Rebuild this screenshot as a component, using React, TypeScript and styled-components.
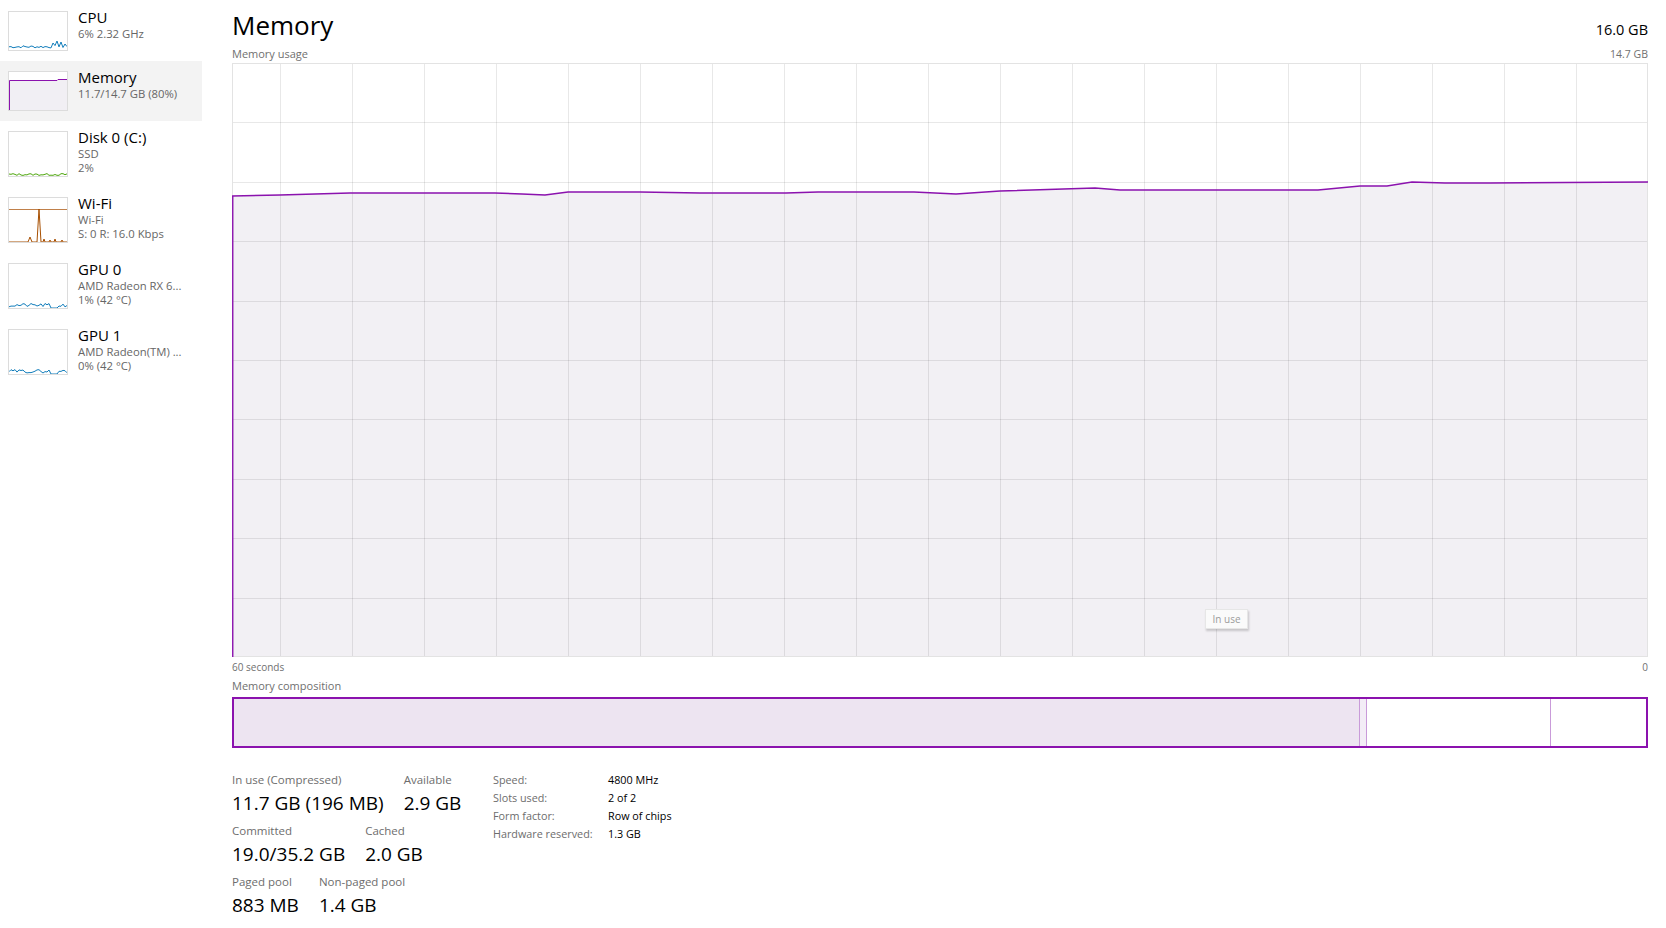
import React from 'react';
import styled, { createGlobalStyle } from 'styled-components';

const GlobalStyle = createGlobalStyle`
  html, body { margin: 0; padding: 0; background: #ffffff; }
  body { font-family: "Segoe UI", "Open Sans", "Noto Sans", sans-serif; color: #000; }
  * { box-sizing: border-box; }
`;

const Page = styled.div`
  display: flex;
  width: 1666px;
  height: 928px;
  overflow: hidden;
  background: #fff;
`;

const Sidebar = styled.nav`
  width: 202px;
  flex: none;
  padding-top: 1px;
  display: flex;
  flex-direction: column;
`;

const NavItem = styled.div<{ $active?: boolean; $tall?: boolean }>`
  display: flex;
  align-items: flex-start;
  gap: 10px;
  height: ${(p) => (p.$tall ? 66 : 60)}px;
  padding: 6px 0 0 8px;
  background: ${(p) => (p.$active ? '#f3f3f3' : 'transparent')};
`;

const Thumb = styled.div<{ $tall?: boolean }>`
  flex: none;
  width: 60px;
  height: ${(p) => (p.$tall ? 46 : 40)}px;
  margin-top: 4px;
  border: 1px solid #dcdcdc;
  background: #fff;
  svg { display: block; }
`;

const NavText = styled.div`
  display: flex;
  flex-direction: column;
  min-width: 0;
`;

const NavTitle = styled.div`
  font-size: 15px;
  line-height: 20px;
  color: #000;
  white-space: nowrap;
`;

const NavSub = styled.div`
  font-size: 11.3px;
  line-height: 14px;
  color: #666;
  white-space: nowrap;
`;

const Main = styled.main`
  flex: 1;
  display: flex;
  flex-direction: column;
  padding: 9px 18px 0 30px;
  min-width: 0;
`;

const HeaderRow = styled.div`
  display: flex;
  justify-content: space-between;
  align-items: baseline;
`;

const Title = styled.h1`
  margin: 0;
  font-size: 26px;
  line-height: 32px;
  font-weight: 400;
  color: #000;
`;

const Capacity = styled.div`
  font-size: 14.5px;
  color: #000;
`;

const CaptionRow = styled.div<{ $mt: number }>`
  display: flex;
  justify-content: space-between;
  align-items: baseline;
  margin-top: ${(p) => p.$mt}px;
`;

const Caption = styled.span<{ $size: number; $lh: number }>`
  font-size: ${(p) => p.$size}px;
  line-height: ${(p) => p.$lh}px;
  color: #707070;
`;

const ChartBox = styled.div`
  position: relative;
  width: 1416px;
  height: 594px;
  svg { display: block; }
`;

const Tooltip = styled.div`
  position: absolute;
  left: 973px;
  top: 546px;
  width: 43px;
  height: 20px;
  display: flex;
  align-items: center;
  justify-content: center;
  font-size: 10px;
  color: #9a9a9a;
  background: #fafafa;
  border: 1px solid #e6e6e6;
  box-shadow: 1px 2px 2px rgba(0, 0, 0, 0.18);
`;

const CompBar = styled.div`
  margin-top: 4px;
  width: 1416px;
  height: 51px;
  border: 2px solid #8b12ae;
  display: flex;
`;

const Segment = styled.div<{ $fill: string; $last?: boolean }>`
  height: 100%;
  flex: none;
  background: ${(p) => p.$fill};
  border-right: ${(p) => (p.$last ? 'none' : '1px solid #c99bd9')};
`;

const Stats = styled.section`
  display: flex;
  margin-top: 24px;
`;

const LeftStats = styled.div`
  width: 261px;
  flex: none;
  display: flex;
  flex-direction: column;
`;

const StatRow = styled.div`
  display: flex;
  gap: 20px;
  margin-bottom: 7px;
`;

const Stat = styled.div`
  display: flex;
  flex-direction: column;
  white-space: nowrap;
`;

const StatLabel = styled.div`
  font-size: 11.5px;
  line-height: 16px;
  color: #6d6d6d;
`;

const StatValue = styled.div`
  margin-top: 2px;
  font-size: 19px;
  line-height: 26px;
  color: #000;
`;

const Details = styled.dl`
  margin: 0;
  display: grid;
  grid-template-columns: 115px auto;
  font-size: 10.8px;
  line-height: 18px;
  align-content: start;
  margin-top: -1px;
`;

const DetailLabel = styled.dt`
  color: #6d6d6d;
  margin: 0;
`;

const DetailValue = styled.dd`
  color: #000;
  margin: 0;
`;

// ---------- data helpers ----------
const rng = (seed: number) => {
  let s = seed;
  return () => {
    s = (s * 9301 + 49297) % 233280;
    return s / 233280;
  };
};

const spark = (seed: number, w: number, base: number, amp: number, spikes: Record<number, number> = {}) => {
  const r = rng(seed);
  const pts: string[] = [];
  for (let x = 0; x <= w; x += 2) {
    let y = base - r() * amp;
    if (spikes[x] !== undefined) y = spikes[x];
    pts.push(`${x},${y.toFixed(1)}`);
  }
  return pts.join(' ');
};

const Spark: React.FC<{ w: number; h: number; points: string; color: string; fill?: string }> = ({ w, h, points, color, fill }) => (
  <svg width={w} height={h} viewBox={`0 0 ${w} ${h}`}>
    {fill && <polygon points={`0,${h} ${points} ${w},${h}`} fill={fill} />}
    <polyline points={points} fill="none" stroke={color} strokeWidth={1} />
  </svg>
);

const MemoryThumb = () => (
  <svg width={58} height={38} viewBox="0 0 58 38">
    <polygon points="0,38 0,8 48,8 49,7 58,7 58,38" fill="#f1eff4" />
    <polyline points="0.5,38 0.5,8.5 48,8.5 49,7.5 58,7.5" fill="none" stroke="#8b12ae" strokeWidth={1} />
  </svg>
);

const WifiThumb = () => (
  <svg width={58} height={44} viewBox="0 0 58 44">
    <line x1={0} y1={11.5} x2={58} y2={11.5} stroke="#c0804a" strokeWidth={1} />
    <polyline
      points="0,44 19,44 21,39 23,44 28,44 30,11 32,44 34,44 35,41 36,44 40,44 41,42 42,44 45,44 46,41 47,44 52,44 53,42 54,44 58,44"
      fill="none"
      stroke="#a74f01"
      strokeWidth={1}
    />
  </svg>
);

type NavEntry = {
  title: string;
  lines: string[];
  active?: boolean;
  thumb: React.ReactNode;
};

const navItems: NavEntry[] = [
  {
    title: 'CPU',
    lines: ['6%  2.32 GHz'],
    thumb: <Spark w={58} h={38} color="#117dbb" points={spark(7, 58, 36, 2.5, { 44: 31, 48: 29, 52: 30, 56: 32 })} />,
  },
  { title: 'Memory', lines: ['11.7/14.7 GB (80%)'], active: true, thumb: <MemoryThumb /> },
  {
    title: 'Disk 0 (C:)',
    lines: ['SSD', '2%'],
    thumb: <Spark w={58} h={44} color="#4da60c" points={spark(13, 58, 43.5, 2)} />,
  },
  { title: 'Wi-Fi', lines: ['Wi-Fi', 'S: 0 R: 16.0 Kbps'], thumb: <WifiThumb /> },
  {
    title: 'GPU 0',
    lines: ['AMD Radeon RX 6...', '1%  (42 °C)'],
    thumb: <Spark w={58} h={44} color="#117dbb" points={spark(21, 58, 43, 3.5, { 42: 44, 44: 44, 46: 44, 48: 44 })} />,
  },
  {
    title: 'GPU 1',
    lines: ['AMD Radeon(TM) ...', '0%  (42 °C)'],
    thumb: <Spark w={58} h={44} color="#117dbb" points={spark(29, 58, 43, 3.5, { 42: 44, 44: 44, 46: 44, 48: 44 })} />,
  },
];

const linePts: [number, number][] = [
  [0, 133], [48, 132], [118, 130], [263, 130], [290, 131], [313, 132], [336, 129], [408, 129],
  [468, 130], [554, 130], [586, 129], [682, 129], [724, 131], [768, 128], [863, 125],
  [888, 127], [978, 127], [1086, 127], [1128, 123], [1155, 123], [1180, 119],
  [1213, 120], [1258, 120], [1416, 119],
];

const CW = 1416;
const CH = 594;

const MemoryChart = () => {
  const line = linePts.map(([x, y]) => `${x},${y}`).join(' ');
  const rows = Array.from({ length: 9 }, (_, i) => Math.round(((i + 1) * CH) / 10) + 0.5);
  const cols = Array.from({ length: 19 }, (_, i) => 48 + 72 * i + 0.5);
  return (
    <svg width={CW} height={CH} viewBox={`0 0 ${CW} ${CH}`}>
      <rect x={0} y={0} width={CW} height={CH} fill="#fff" />
      <polygon points={`0,${CH} ${line} ${CW},${CH}`} fill="#f2f0f4" />
      {rows.map((y) => (
        <line key={`r${y}`} x1={0} y1={y} x2={CW} y2={y} stroke="rgba(0,0,0,0.09)" strokeWidth={1} shapeRendering="crispEdges" />
      ))}
      {cols.map((x) => (
        <line key={`c${x}`} x1={x} y1={0} x2={x} y2={CH} stroke="rgba(0,0,0,0.09)" strokeWidth={1} shapeRendering="crispEdges" />
      ))}
      <rect x={0.5} y={0.5} width={CW - 1} height={CH - 1} fill="none" stroke="#e3e3e3" strokeWidth={1} shapeRendering="crispEdges" />
      <polyline points={`0.75,${CH} 0.75,133 ${line}`} fill="none" stroke="#8b12ae" strokeWidth={1.4} />
    </svg>
  );
};

const segments = [
  { w: 1126, fill: '#ede4f1' },
  { w: 7, fill: '#f3edf6' },
  { w: 184, fill: '#ffffff' },
  { w: 95, fill: '#ffffff', last: true },
];

const stats = [
  [
    { label: 'In use (Compressed)', value: '11.7 GB (196 MB)' },
    { label: 'Available', value: '2.9 GB' },
  ],
  [
    { label: 'Committed', value: '19.0/35.2 GB' },
    { label: 'Cached', value: '2.0 GB' },
  ],
  [
    { label: 'Paged pool', value: '883 MB' },
    { label: 'Non-paged pool', value: '1.4 GB' },
  ],
];

const details = [
  ['Speed:', '4800 MHz'],
  ['Slots used:', '2 of 2'],
  ['Form factor:', 'Row of chips'],
  ['Hardware reserved:', '1.3 GB'],
];

export default function App() {
  return (
    <>
      <GlobalStyle />
      <Page>
        <Sidebar>
          {navItems.map((item) => {
            const tall = item.lines.length > 1;
            return (
              <NavItem key={item.title} $active={item.active} $tall={tall}>
                <Thumb $tall={tall}>{item.thumb}</Thumb>
                <NavText>
                  <NavTitle>{item.title}</NavTitle>
                  {item.lines.map((l) => (
                    <NavSub key={l}>{l}</NavSub>
                  ))}
                </NavText>
              </NavItem>
            );
          })}
        </Sidebar>
        <Main>
          <HeaderRow>
            <Title>Memory</Title>
            <Capacity>16.0 GB</Capacity>
          </HeaderRow>
          <CaptionRow $mt={4}>
            <Caption $size={11} $lh={18}>Memory usage</Caption>
            <Caption $size={10.5} $lh={18}>14.7 GB</Caption>
          </CaptionRow>
          <ChartBox>
            <MemoryChart />
            <Tooltip>In use</Tooltip>
          </ChartBox>
          <CaptionRow $mt={3}>
            <Caption $size={10} $lh={14}>60 seconds</Caption>
            <Caption $size={10} $lh={14}>0</Caption>
          </CaptionRow>
          <CaptionRow $mt={4}>
            <Caption $size={11} $lh={15}>Memory composition</Caption>
          </CaptionRow>
          <CompBar>
            {segments.map((s, i) => (
              <Segment key={i} $fill={s.fill} $last={s.last} style={{ width: s.w }} />
            ))}
          </CompBar>
          <Stats>
            <LeftStats>
              {stats.map((row, i) => (
                <StatRow key={i}>
                  {row.map((s) => (
                    <Stat key={s.label}>
                      <StatLabel>{s.label}</StatLabel>
                      <StatValue>{s.value}</StatValue>
                    </Stat>
                  ))}
                </StatRow>
              ))}
            </LeftStats>
            <Details>
              {details.map(([k, v]) => (
                <React.Fragment key={k}>
                  <DetailLabel>{k}</DetailLabel>
                  <DetailValue>{v}</DetailValue>
                </React.Fragment>
              ))}
            </Details>
          </Stats>
        </Main>
      </Page>
    </>
  );
}
